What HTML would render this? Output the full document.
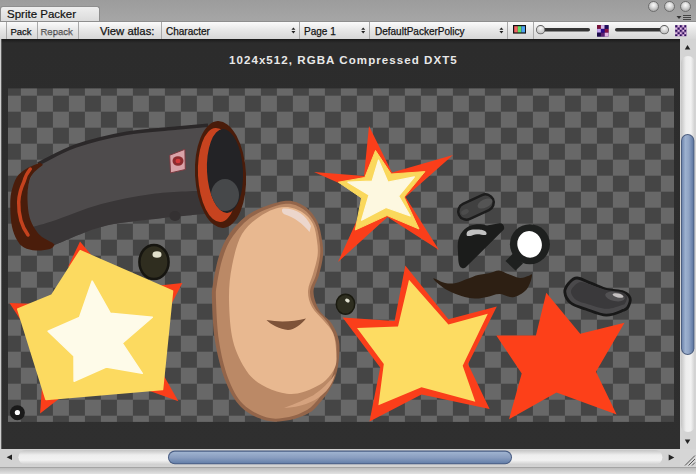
<!DOCTYPE html>
<html><head><meta charset="utf-8">
<style>
*{margin:0;padding:0;box-sizing:border-box}
html,body{width:696px;height:474px;overflow:hidden;background:#a4a4a4;font-family:"Liberation Sans",sans-serif}
.a{position:absolute}
#topbar{left:0;top:0;width:696px;height:21px;background:linear-gradient(#9c9c9c,#a6a6a6)}
#tab{left:0;top:6px;width:99.5px;height:16px;border:1px solid #8e8e8e;border-bottom:none;border-radius:3px 3px 0 0;background:linear-gradient(#eeeeee,#dadada)}
#tabtxt{left:7px;top:8px;font-size:11.5px;color:#111;-webkit-text-stroke:0.2px #111}
.wb{top:1px;width:11px;height:11px;border-radius:50%;background:radial-gradient(circle at 50% 35%,#fafafa 0,#dcdcdc 35%,#a8a8a8 80%,#8a8a8a 100%);border:1px solid #6e6e6e}
#toolbar{left:0;top:21px;width:696px;height:18px;background:linear-gradient(#fbfbfb,#e6e6e6 50%,#d6d6d6);border-top:1px solid #8e8e8e}
.sep{top:22px;width:1px;height:17px;background:#a9a9a9}
.tt{top:25.5px;font-size:10px;color:#141414;-webkit-text-stroke:0.25px #141414}
#dark{left:1px;top:39px;width:679px;height:411px;background:linear-gradient(#1a1a1a,#2c2c2c 4px,#2f2f2f)}
#vsb{left:680px;top:38px;width:16px;height:412px;background:#d6d6d6}
#hsb{left:0;top:449px;width:680px;height:17px;background:#d6d6d6}
#bottom{left:0;top:466px;width:696px;height:8px;background:linear-gradient(#c4c4c4,#e6e6e6)}
#title{left:229px;top:53.5px;white-space:nowrap;font-size:11px;font-weight:bold;color:#e8e8e8;letter-spacing:1px;transform:scaleX(1.05);transform-origin:0 0}
</style></head><body>
<div class="a" id="topbar"></div>
<div class="a" id="tab"></div>
<div class="a" id="tabtxt">Sprite Packer</div>
<div class="a wb" style="left:648px"></div>
<div class="a wb" style="left:664px"></div>
<div class="a wb" style="left:680px"></div>

<div class="a" id="toolbar"></div>
<div class="a sep" style="left:6px"></div>
<div class="a sep" style="left:37px"></div>
<div class="a sep" style="left:78px"></div>
<div class="a sep" style="left:161px"></div>
<div class="a sep" style="left:299px"></div>
<div class="a sep" style="left:369px"></div>
<div class="a sep" style="left:507px"></div>
<div class="a sep" style="left:533px"></div>
<div class="a tt" style="left:10.5px;font-size:9.5px;top:25.5px">Pack</div>
<div class="a tt" style="left:40.5px;font-size:9.5px;top:25.5px;color:#8c8c8c">Repack</div>
<div class="a tt" style="left:100px;font-size:11.3px;top:25px">View atlas:</div>
<div class="a tt" style="left:166px">Character</div>
<div class="a tt" style="left:304px">Page 1</div>
<div class="a tt" style="left:375px">DefaultPackerPolicy</div>
<svg class="a" style="left:0;top:0" width="696" height="40" viewBox="0 0 696 40">
<g fill="#222">
<path d="M291.4 29.7 L293.4 27.4 L295.4 29.7 Z M291.4 31 L293.4 33.4 L295.4 31 Z"/>
<path d="M361.2 29.7 L363.2 27.4 L365.2 29.7 Z M361.2 31 L363.2 33.4 L365.2 31 Z"/>
<path d="M499.4 29.7 L501.4 27.4 L503.4 29.7 Z M499.4 31 L501.4 33.4 L503.4 31 Z"/>
</g>
<rect x="513" y="25" width="13" height="8.6" fill="#111"/>
<rect x="514.2" y="26.2" width="3.6" height="6.2" fill="#f06262"/>
<rect x="517.8" y="26.2" width="3.6" height="6.2" fill="#62de62"/>
<rect x="521.4" y="26.2" width="3.6" height="6.2" fill="#4fa2f2"/>
<rect x="541" y="27.9" width="49" height="3.6" rx="1.8" fill="#343434"/>
<circle cx="540.6" cy="29.7" r="4.6" fill="#5c5c5c"/>
<circle cx="540.6" cy="29.7" r="3.8" fill="url(#knob)"/>
<rect x="615" y="27.9" width="49" height="3.6" rx="1.8" fill="#343434"/>
<circle cx="664.3" cy="29.7" r="4.6" fill="#5c5c5c"/>
<circle cx="664.3" cy="29.7" r="3.8" fill="url(#knob)"/>
<defs><radialGradient id="knob" cx="0.5" cy="0.3" r="0.7"><stop offset="0" stop-color="#fafafa"/><stop offset="1" stop-color="#bdbdbd"/></radialGradient></defs>
<g transform="translate(597.1 25.1)">
<rect width="11.4" height="11.4" fill="#2a0c6a"/>
<rect x="0" y="0" width="3.8" height="3.8" fill="#7a1034"/>
<rect x="3.8" y="0" width="3.8" height="3.8" fill="#d8b8e8"/>
<rect x="7.6" y="0" width="3.8" height="3.8" fill="#1c0a5a"/>
<rect x="0" y="3.8" width="3.8" height="3.8" fill="#c4a4f0"/>
<rect x="3.8" y="3.8" width="3.8" height="3.8" fill="#2c0a8a"/>
<rect x="7.6" y="3.8" width="3.8" height="3.8" fill="#8a1444"/>
<rect x="0" y="7.6" width="3.8" height="3.8" fill="#1a0a48"/>
<rect x="3.8" y="7.6" width="3.8" height="3.8" fill="#5a2070"/>
<rect x="7.6" y="7.6" width="3.8" height="3.8" fill="#e4b4e4"/>
</g>
<defs><pattern id="ic2" x="675.1" y="25.1" width="4.6" height="4.6" patternUnits="userSpaceOnUse"><rect width="4.6" height="4.6" fill="#e6bde6"/><rect width="2.3" height="2.3" fill="#2a0a5a"/><rect x="2.3" y="2.3" width="2.3" height="2.3" fill="#2a0a5a"/></pattern></defs>
<rect x="675.1" y="25.1" width="11.5" height="11.2" fill="url(#ic2)"/>
<path d="M676.5 16 L681.5 16 L679 19 Z" fill="#333"/>
<g stroke="#444" stroke-width="1"><path d="M683 15.5 H691 M683 17.5 H691 M683 19.5 H691"/></g>
</svg>
<div class="a" id="dark"></div>
<div class="a" id="title">1024x512, RGBA Compressed DXT5</div>
<svg class="a" style="left:0;top:0" width="696" height="474" viewBox="0 0 696 474">
<defs>
<pattern id="chk" x="4.9" y="79.7" width="32" height="32" patternUnits="userSpaceOnUse">
<rect width="32" height="32" fill="#686868"/>
<rect width="16" height="16" fill="#454545"/>
<rect x="16" y="16" width="16" height="16" fill="#454545"/>
</pattern>
<clipPath id="cl"><rect x="8" y="88.4" width="666" height="333.5"/></clipPath>
</defs>
<rect x="8" y="88.4" width="666" height="333.5" fill="url(#chk)"/>
<g clip-path="url(#cl)">
<path d="M 40 163 C 46.0 160.2 61.6 150.9 76.0 145.9 C 90.4 140.9 109.7 136.2 126.6 133.2 C 143.5 130.2 163.7 129.4 177.3 128.1 C 190.9 126.8 202.9 125.7 208.0 125.2 L 208 213.5 C 198.7 214.5 169.8 217.1 152.0 219.3 C 134.2 221.5 118.0 222.5 101.3 226.9 C 84.6 231.3 60.2 242.8 52.0 246.0 C 50.0 244.7 43.5 241.7 40.0 238.0 C 36.5 234.3 33.2 229.5 31.0 224.0 C 28.8 218.5 27.5 211.3 27.0 205.0 C 26.5 198.7 27.3 191.1 28.2 186.0 C 29.1 180.9 30.4 178.1 32.4 174.3 C 34.4 170.5 38.7 164.9 40.0 163.0 Z" fill="#4e4b4c"/>
<clipPath id="bodyc"><path d="M 40 163 C 46.0 160.2 61.6 150.9 76.0 145.9 C 90.4 140.9 109.7 136.2 126.6 133.2 C 143.5 130.2 163.7 129.4 177.3 128.1 C 190.9 126.8 202.9 125.7 208.0 125.2 L 208 213.5 C 198.7 214.5 169.8 217.1 152.0 219.3 C 134.2 221.5 118.0 222.5 101.3 226.9 C 84.6 231.3 60.2 242.8 52.0 246.0 C 50.0 244.7 43.5 241.7 40.0 238.0 C 36.5 234.3 33.2 229.5 31.0 224.0 C 28.8 218.5 27.5 211.3 27.0 205.0 C 26.5 198.7 27.3 191.1 28.2 186.0 C 29.1 180.9 30.4 178.1 32.4 174.3 C 34.4 170.5 38.7 164.9 40.0 163.0 Z"/></clipPath>
<path d="M 20 230 C 25.1 228.6 37.2 226.1 50.7 221.8 C 64.2 217.5 84.4 208.7 101.3 204.1 C 118.2 199.5 133.9 196.3 152.0 194.0 C 170.1 191.7 200.3 191.1 210.0 190.5  L 210 260 L 20 260 Z" fill="#393637" clip-path="url(#bodyc)"/>
<path d="M 38 164 C 46.0 160.2 61.6 150.9 76.0 145.9 C 90.4 140.9 109.7 136.2 126.6 133.2 C 143.5 130.2 163.7 129.4 177.3 128.1 C 190.9 126.8 202.9 125.7 208.0 125.2 " fill="none" stroke="#2b2829" stroke-width="3.5"/>
<ellipse cx="175" cy="216" rx="5.5" ry="5" fill="#343132"/>
<path d="M 40 162.5 C 37.7 163.6 29.9 166.5 26.0 169.0 C 22.1 171.5 19.1 173.5 16.6 177.4 C 14.2 181.3 12.4 187.1 11.3 192.2 C 10.2 197.3 10.2 202.2 10.3 208.0 C 10.4 213.8 10.9 221.5 12.0 226.8 C 13.1 232.1 15.0 236.6 17.0 240.0 C 19.0 243.4 20.8 245.8 24.0 247.5 C 27.2 249.2 31.7 250.2 36.0 250.5 C 40.3 250.8 46.9 249.9 50.0 249.0 C 53.1 248.1 53.8 245.7 54.5 245.0  L 54.5 245 C 54.1 244.6 54.1 243.8 52.0 242.5 C 49.9 241.2 44.8 239.2 42.0 237.0 C 39.2 234.8 37.1 232.3 35.0 229.0 C 32.9 225.7 30.8 221.8 29.5 217.0 C 28.2 212.2 27.7 205.3 27.5 200.0 C 27.3 194.7 27.7 189.3 28.5 185.0 C 29.3 180.7 30.0 177.7 32.4 174.3 C 34.8 170.9 41.2 166.4 43.0 164.8  Z" fill="#4a1d0b"/>
<path d="M 30.3 169 C 27 173, 25 177, 24 181.6 C 21 188, 19 195, 18.7 202 C 18.5 212, 20 224, 28 235" fill="none" stroke="#c4421e" stroke-width="3.5" stroke-linecap="round"/>
<path d="M 169.7 155.2 L 184.9 149.3 L 185.3 169.5 L 170.5 172.9 Z" fill="#d9a3a8" stroke="#7a3a40" stroke-width="1"/>
<ellipse cx="178" cy="161" rx="5.5" ry="4.8" fill="#8c2b2e"/>
<ellipse cx="178" cy="161" rx="2.5" ry="2.2" fill="#d43a3a"/>
<ellipse cx="220.5" cy="174.5" rx="25.5" ry="53.5" fill="#4a1c0a" transform="rotate(-3 220.5 174.5)"/>
<ellipse cx="218" cy="175" rx="20" ry="47" fill="#c7431f" transform="rotate(-3 218 175)"/>
<clipPath id="mouthc"><ellipse cx="225" cy="171" rx="18" ry="42" transform="rotate(-3 225 171)"/></clipPath>
<ellipse cx="225" cy="171" rx="18" ry="42" fill="#232326" transform="rotate(-3 225 171)"/>
<ellipse cx="225" cy="195" rx="14" ry="16" fill="#46484a" clip-path="url(#mouthc)"/>
<polygon points="80,241.5 93,257 68,267" fill="#fa3e1a"/>
<polygon points="182.4,283.1 159.5,285.5 170.9,305" fill="#fa3e1a"/>
<polygon points="178.4,401.3 163.7,375.4 148.4,390.5" fill="#fa3e1a"/>
<polygon points="40.1,413.4 60,398 42,386" fill="#fa3e1a"/>
<polygon points="9.5,303 22.2,322.5 31,303.8" fill="#fa3e1a"/>
<polygon points="80.2,251 172.3,291.1 162.3,389.3 46.1,399.3 18,309.1 52.1,295.1" fill="#fcda60" stroke="#fcda60" stroke-width="2" stroke-linejoin="round"/>
<polygon points="92.2,281.1 110.2,313.2 152.3,317.2 122.2,343.2 142.3,373.3 106.2,367 74.1,381.3 74,356 48.1,331.2 79.5,317.5" fill="#fefbe9" stroke="#fefbe9" stroke-width="1.5" stroke-linejoin="round"/>
<ellipse cx="154" cy="262" rx="14.6" ry="17.1" fill="#2f2d1f" stroke="#161510" stroke-width="2.5"/>
<ellipse cx="157" cy="254.5" rx="4.5" ry="3.2" fill="#e2e0cc"/>
<ellipse cx="345.5" cy="304.2" rx="9.2" ry="10" fill="#2e2e20" stroke="#1a1a10" stroke-width="1.5"/>
<ellipse cx="347.4" cy="300.5" rx="2.4" ry="1.8" fill="#e0e0d0" transform="rotate(30 347.4 300.5)"/>
<circle cx="17.4" cy="412.8" r="7.5" fill="#1a1a1a"/>
<circle cx="17.4" cy="412.5" r="2.6" fill="#ffffff"/>
<path d="M 284.0 201.0 C 292.8 199.8 298.5 202.7 304.0 206.0 C 309.5 209.3 314.0 215.3 317.0 221.0 C 320.0 226.7 321.0 234.2 322.0 240.0 C 323.0 245.8 323.5 250.2 323.0 256.0 C 322.5 261.8 320.6 269.0 319.0 275.0 C 317.4 281.0 313.4 286.1 313.5 292.0 C 313.6 297.9 316.4 305.3 319.5 310.6 C 322.6 315.9 328.8 318.9 332.0 324.0 C 335.2 329.1 337.9 334.7 339.0 341.0 C 340.1 347.3 339.2 355.8 338.5 362.0 C 337.8 368.2 336.8 373.0 335.0 378.0 C 333.2 383.0 330.8 387.5 328.0 392.0 C 325.2 396.5 321.2 401.4 318.0 405.0 C 314.8 408.6 313.2 410.8 308.5 413.3 C 303.8 415.8 297.1 418.8 290.0 420.0 C 282.9 421.2 274.2 422.7 266.0 420.5 C 257.8 418.3 247.8 413.8 241.0 407.0 C 234.2 400.2 229.3 391.0 225.0 380.0 C 220.7 369.0 217.2 354.3 215.0 341.0 C 212.8 327.7 212.3 309.5 212.0 300.0 C 211.7 290.5 211.8 291.3 213.0 284.0 C 214.2 276.7 216.2 264.5 219.0 256.0 C 221.8 247.5 224.7 240.2 230.0 233.0 C 235.3 225.8 242.0 218.3 251.0 213.0 C 260.0 207.7 275.2 202.2 284.0 201.0 Z" fill="#93654a"/>
<path d="M 284.0 204.0 C 292.3 202.8 297.8 205.8 303.0 209.0 C 308.2 212.2 312.2 217.7 315.0 223.0 C 317.8 228.3 318.7 235.5 319.5 241.0 C 320.3 246.5 320.6 250.3 320.0 256.0 C 319.4 261.7 317.7 269.0 316.0 275.0 C 314.3 281.0 310.2 286.5 310.0 292.0 C 309.8 297.5 312.0 302.8 315.0 308.0 C 318.0 313.2 324.5 317.3 328.0 323.0 C 331.5 328.7 334.8 335.5 336.0 342.0 C 337.2 348.5 336.2 356.2 335.5 362.0 C 334.8 367.8 333.8 372.3 332.0 377.0 C 330.2 381.7 327.8 385.7 325.0 390.0 C 322.2 394.3 318.2 399.6 315.0 403.0 C 311.8 406.4 310.3 408.2 306.0 410.5 C 301.7 412.8 295.5 415.8 289.0 417.0 C 282.5 418.2 274.7 419.7 267.0 417.5 C 259.3 415.3 249.5 410.6 243.0 404.0 C 236.5 397.4 232.0 388.5 228.0 378.0 C 224.0 367.5 221.0 354.0 219.0 341.0 C 217.0 328.0 216.3 309.5 216.0 300.0 C 215.7 290.5 215.8 291.2 217.0 284.0 C 218.2 276.8 220.3 265.0 223.0 257.0 C 225.7 249.0 228.0 242.8 233.0 236.0 C 238.0 229.2 244.5 221.3 253.0 216.0 C 261.5 210.7 275.7 205.2 284.0 204.0 Z" fill="#bb8966"/>
<path d="M 284.0 207.0 C 290.7 206.5 297.2 209.2 302.0 212.0 C 306.8 214.8 310.5 219.2 313.0 224.0 C 315.5 228.8 316.2 235.7 317.0 241.0 C 317.8 246.3 318.2 250.5 317.5 256.0 C 316.8 261.5 314.6 268.2 313.0 274.0 C 311.4 279.8 308.2 285.5 308.0 291.0 C 307.8 296.5 309.3 302.0 312.0 307.0 C 314.7 312.0 320.5 316.7 324.0 321.0 C 327.5 325.3 331.0 328.3 333.0 333.0 C 335.0 337.7 335.6 343.5 336.0 349.0 C 336.4 354.5 337.2 360.8 335.5 366.0 C 333.8 371.2 329.7 376.3 326.0 380.0 C 322.3 383.7 318.1 385.8 313.3 388.0 C 308.6 390.2 302.8 392.7 297.5 393.5 C 292.2 394.3 287.5 394.1 281.6 392.7 C 275.7 391.3 267.8 388.6 262.0 385.0 C 256.2 381.4 251.4 378.3 246.6 371.0 C 241.8 363.7 235.9 352.8 233.0 341.0 C 230.1 329.2 229.2 312.5 229.0 300.0 C 228.8 287.5 229.8 277.0 232.0 266.0 C 234.2 255.0 237.0 242.5 242.0 234.0 C 247.0 225.5 255.0 219.5 262.0 215.0 C 269.0 210.5 277.3 207.5 284.0 207.0 Z" fill="#e8b890"/>
<path d="M 284 408 C 296 403.5, 306 399, 313 395.5 C 321 390, 330 382, 335 374 C 333 383, 328 390, 322 395 C 314 402, 300 407.5, 284 408 Z" fill="#d5a27e"/>
<path d="M 283 208.5 C 296 208, 306 215, 311 226 L 309.5 232 C 303 224, 294 217, 285 214.5 C 282 213.5, 281 209.5, 283 208.5 Z" fill="#ecd6cc"/>
<path d="M 266.5 320 C 280 322.5, 294 321.5, 306 318.5 C 302 324, 294 330, 288 330 C 280 329, 271 325, 266.5 320 Z" fill="#7e5339"/>
<polygon points="369,126 392,172.5 453,155 405.5,197 439,250 387.5,217 338,262 368,196 314,172 364,176" fill="#fa3e1a"/>
<polygon points="375.5,150.5 391.2,174 424.9,171.6 404,197 419,229 387,215.5 355.3,230 361.6,198 338.4,182.2 364.8,177.5" fill="#fad85c" stroke="#fad85c" stroke-width="1" stroke-linejoin="round"/>
<polygon points="378.5,160 388,182.2 414.4,176.9 398.6,196 410.2,216 386,207.5 361.6,220.2 369,195 347.9,182.2 372.2,181" fill="#fdf8e0" stroke="#fdf8e0" stroke-width="1.2" stroke-linejoin="round"/>
<polygon points="405.3,265.4 448.4,319.2 496.8,306.6 468,364 489.6,408.9 421.5,394.5 369.5,421.4 380.2,367.6 342.6,317.4 394.6,321" fill="#fa3e1a"/>
<polygon points="409,279.7 448.4,324.6 487.8,313.8 462.7,365.8 475.3,401.7 421.5,387.3 378.4,405.3 383.8,364 357,328.1 398,326.4" fill="#fddc62"/>
<polygon points="546.3,292.7 580.2,333.8 624.5,322.7 596,371.8 616.6,414.5 556.5,392.4 509,419.3 521.7,373.4 496.3,335.4 535.9,335.4" fill="#fd4019"/>
<rect x="456" y="197.5" width="40" height="19" rx="9.5" fill="#1c1c1c" transform="rotate(-25 476 207)"/>
<rect x="458.5" y="200" width="35" height="14" rx="7" fill="#404040" transform="rotate(-25 476 207)"/>
<ellipse cx="485" cy="203.5" rx="8" ry="4" fill="#545454" transform="rotate(-25 485 203.5)"/>
<ellipse cx="465" cy="212" rx="4" ry="2.5" fill="#4c4c4c" transform="rotate(-25 465 212)"/>
<path d="M 461.5 267.8 C 459 266.5, 458.2 262, 458.2 257 L 457.7 247 C 457.5 237, 462 229.5, 469.5 226 C 473.5 224.6, 478 224, 482 224.5 L 487 225.6 L 499.5 223.3 C 502.5 222.8, 505.2 226, 503.8 229.6 L 465.5 267.6 C 464.3 268.5, 462.8 268.5, 461.5 267.8 Z" fill="#1b1c1b"/>
<path d="M 466.8 235.5 C 466.4 234.8 466.5 232.5 467.5 231.5 C 468.5 230.5 470.7 229.9 473.0 229.6 C 475.3 229.3 479.3 229.4 481.5 229.8 C 483.7 230.2 485.3 231.1 486.0 232.0 C 486.7 232.9 487.0 234.6 485.5 235.0 C 484.0 235.4 479.6 234.1 477.0 234.3 C 474.4 234.5 471.7 235.8 470.0 236.0 C 468.3 236.2 467.2 236.2 466.8 235.5 Z" fill="#c2c2c2"/>
<polygon points="505.5,261 513,253.5 523,263.5 515.5,270.5" fill="#1e201f"/>
<circle cx="529.9" cy="244.2" r="20" fill="#1e201f"/>
<ellipse cx="529.6" cy="244.4" rx="12.2" ry="13.4" fill="#ffffff" transform="rotate(-15 529.6 244.4)"/>
<path d="M 433.6 278.3 C 434.7 278.1 441.3 282.2 445.0 283.0 C 448.7 283.8 452.3 283.7 456.0 283.0 C 459.7 282.3 463.3 280.3 467.0 279.0 C 470.7 277.7 474.2 276.0 478.0 275.0 C 481.8 274.0 486.5 273.8 490.0 273.0 C 493.5 272.2 496.0 270.3 499.0 270.5 C 502.0 270.7 504.5 272.8 508.0 274.0 C 511.5 275.2 516.7 277.7 520.0 278.0 C 523.3 278.3 526.0 276.6 528.0 276.0 C 530.0 275.4 531.7 273.3 532.0 274.5 C 532.3 275.7 531.2 280.2 530.0 283.0 C 528.8 285.8 527.8 288.6 525.0 291.0 C 522.2 293.4 517.3 296.7 513.0 297.2 C 508.7 297.7 503.6 294.0 499.3 294.0 C 495.0 294.0 491.1 296.2 487.0 297.0 C 482.9 297.8 479.3 298.7 475.0 298.5 C 470.7 298.3 465.9 297.3 461.4 296.0 C 456.9 294.7 451.8 292.5 448.0 290.5 C 444.2 288.5 440.9 286.0 438.5 284.0 C 436.1 282.0 432.5 278.5 433.6 278.3 Z" fill="#2d1f13"/>
<path d="M 564.8 292.0 C 564.5 288.7 567.0 285.3 569.0 283.0 C 571.0 280.7 573.2 277.9 577.0 278.0 C 580.8 278.1 586.5 281.5 591.6 283.4 C 596.7 285.3 602.2 288.1 607.5 289.5 C 612.8 290.9 619.6 290.6 623.4 292.0 C 627.1 293.4 629.2 295.5 630.0 298.0 C 630.8 300.5 629.1 304.9 628.0 307.0 C 626.9 309.1 627.0 308.9 623.4 310.3 C 619.8 311.7 612.6 315.4 606.3 315.2 C 600.0 315.0 591.4 311.0 585.5 309.0 C 579.6 307.0 574.4 305.8 570.9 303.0 C 567.4 300.2 565.1 295.3 564.8 292.0 Z" fill="#4a494b" stroke="#181818" stroke-width="2.8"/>
<path d="M 570.9 292.1 C 570.7 289.7 572.8 287.3 574.6 285.6 C 576.3 284.0 578.2 282.0 581.4 282.0 C 584.7 282.1 589.6 284.5 594.0 285.9 C 598.4 287.3 603.1 289.3 607.7 290.3 C 612.2 291.4 618.1 291.1 621.3 292.1 C 624.6 293.1 626.4 294.6 627.0 296.4 C 627.7 298.2 626.2 301.4 625.3 302.9 C 624.4 304.4 624.5 304.3 621.3 305.3 C 618.2 306.3 612.1 309.0 606.6 308.8 C 601.2 308.7 593.8 305.8 588.8 304.4 C 583.7 302.9 579.2 302.1 576.2 300.0 C 573.2 298.0 571.2 294.5 570.9 292.1 Z" fill="#3a393b"/>
<ellipse cx="615" cy="296.5" rx="10" ry="4.5" fill="#525153" transform="rotate(12 615 296.5)"/>
<ellipse cx="618" cy="295.5" rx="5.5" ry="2" fill="#c4c0c0" transform="rotate(12 618 295.5)"/>
</g>
</svg>

<svg class="a" style="left:0;top:0" width="696" height="474" viewBox="0 0 696 474">
<defs>
<linearGradient id="vtrack" x1="0" y1="0" x2="1" y2="0"><stop offset="0" stop-color="#c4c4c4"/><stop offset="0.35" stop-color="#eeeeee"/><stop offset="0.7" stop-color="#f2f2f2"/><stop offset="1" stop-color="#cfcfcf"/></linearGradient>
<linearGradient id="htrack" x1="0" y1="0" x2="0" y2="1"><stop offset="0" stop-color="#c4c4c4"/><stop offset="0.35" stop-color="#eeeeee"/><stop offset="0.7" stop-color="#f2f2f2"/><stop offset="1" stop-color="#cfcfcf"/></linearGradient>
<linearGradient id="vthumb" x1="0" y1="0" x2="1" y2="0"><stop offset="0" stop-color="#6f86ae"/><stop offset="0.3" stop-color="#9db1cf"/><stop offset="0.6" stop-color="#8fa3c4"/><stop offset="1" stop-color="#5d77a2"/></linearGradient>
<linearGradient id="hthumb" x1="0" y1="0" x2="0" y2="1"><stop offset="0" stop-color="#9fb3d0"/><stop offset="0.5" stop-color="#8a9ec0"/><stop offset="1" stop-color="#6580aa"/></linearGradient>
<linearGradient id="botg" x1="0" y1="0" x2="0" y2="1"><stop offset="0" stop-color="#bcbcbc"/><stop offset="1" stop-color="#e2e2e2"/></linearGradient>
</defs>
<!-- vertical scrollbar -->
<rect x="680" y="39" width="16" height="411" fill="#d4d4d4"/>
<path d="M684.8 49.6 L687.5 45 L690.3 49.6 Z" fill="#222"/>
<rect x="681" y="56" width="14" height="376" rx="7" fill="url(#vtrack)"/>
<rect x="681" y="134" width="13.4" height="221" rx="6.7" fill="#4d5f80"/>
<rect x="682" y="135" width="11.4" height="219" rx="5.7" fill="url(#vthumb)"/>
<path d="M684.8 439.5 L687.5 444 L690.3 439.5 Z" fill="#222"/>
<!-- horizontal scrollbar -->
<rect x="0" y="449" width="680" height="18" fill="#d2d2d2"/>
<path d="M12 454.4 L6.6 457.3 L12 460.1 Z" fill="#222"/>
<rect x="18.4" y="450" width="644" height="14.5" rx="7.2" fill="url(#htrack)"/>
<rect x="168" y="450.6" width="344" height="13.6" rx="6.8" fill="#4a5e84"/>
<rect x="169" y="451.8" width="342" height="11.4" rx="5.7" fill="url(#hthumb)"/>
<path d="M668.7 454.6 L674.3 457.5 L668.7 460.4 Z" fill="#222"/>
<rect x="680" y="449" width="16" height="18" fill="#d6d6d6"/>
<g stroke="#555" stroke-width="1"><path d="M685 465.5 L695 455.5 M688.5 465.5 L695 459 M692 465.5 L695 462.5"/></g>
<rect x="0" y="467" width="696" height="1" fill="#a4a4a4"/>
<rect x="0" y="468" width="696" height="6" fill="url(#botg)"/>
<rect x="0" y="39" width="1.3" height="410" fill="#d0d0d0"/>
</svg>
</body></html>
